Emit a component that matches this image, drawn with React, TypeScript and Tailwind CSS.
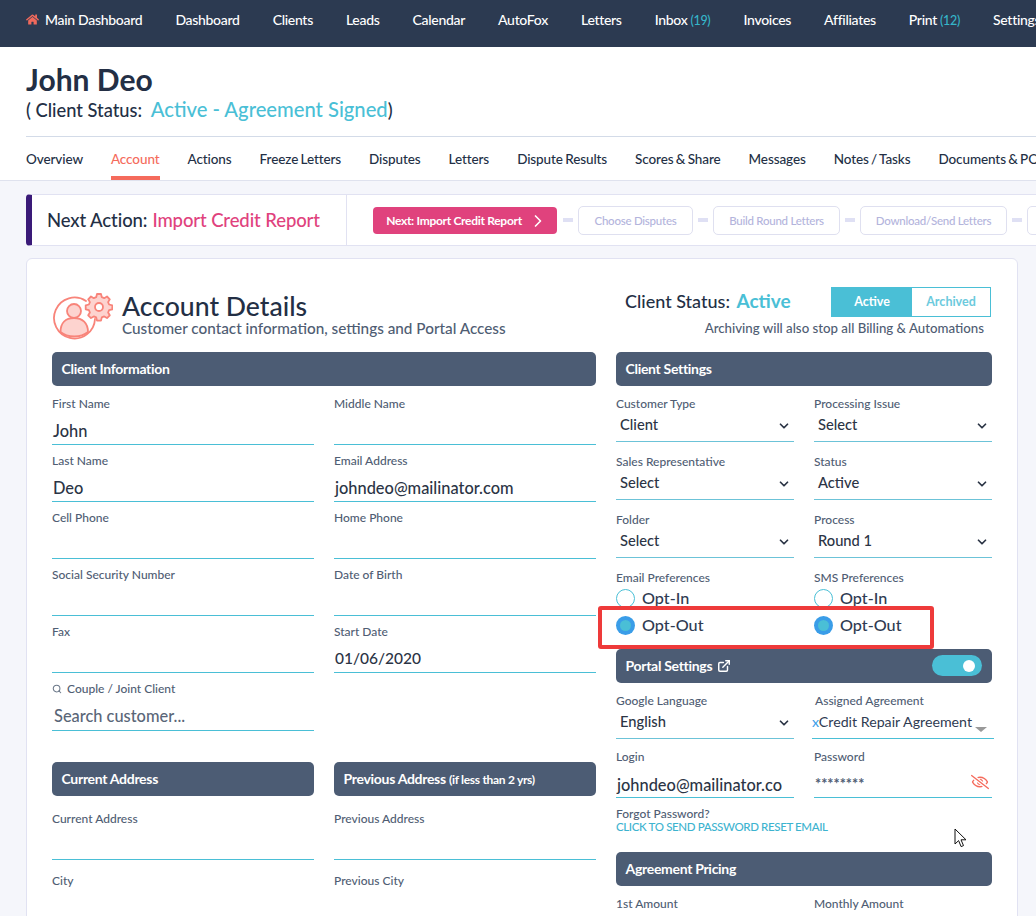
import { ChevronDown, ChevronRight, ExternalLink, Search } from 'lucide-react';
import { FaHome, FaRegEyeSlash } from 'react-icons/fa';
import type { ReactNode } from 'react';

const NAV_ITEMS = [
  { label: 'Dashboard' },
  { label: 'Clients' },
  { label: 'Leads' },
  { label: 'Calendar' },
  { label: 'AutoFox' },
  { label: 'Letters' },
  { label: 'Inbox', count: '(19)' },
  { label: 'Invoices' },
  { label: 'Affiliates' },
  { label: 'Print', count: '(12)' },
  { label: 'Settings' },
];

const TABS = [
  'Overview',
  'Account',
  'Actions',
  'Freeze Letters',
  'Disputes',
  'Letters',
  'Dispute Results',
  'Scores & Share',
  'Messages',
  'Notes / Tasks',
  'Documents & POA',
];

function SectionBar({ children, className = '' }: { children: ReactNode; className?: string }) {
  return (
    <div
      className={`flex h-[34px] items-center justify-between rounded-[5px] bg-[#4c5c74] pr-[10px] pb-[1px] pl-[9.5px] text-[14px] font-bold tracking-[-0.3px] text-white ${className}`}
    >
      {children}
    </div>
  );
}

function Field({
  label,
  value,
  muted,
  className = 'h-[50px]',
  valueClass = '',
}: {
  label: ReactNode;
  value?: string;
  muted?: boolean;
  className?: string;
  valueClass?: string;
}) {
  return (
    <div className={`border-b border-[#4abfd6] ${className}`}>
      <div className="h-[18px] text-[12px] leading-[18px] font-medium text-[#4f5d73]">{label}</div>
      <div
        className={`mt-[4px] h-[27px] px-[1px] text-[16.4px] leading-[27px] font-medium ${muted ? 'pl-[2px] font-bold text-[#5a6678]' : 'text-[#2b3445]'} ${valueClass}`}
      >
        {value}
      </div>
    </div>
  );
}

function SelectField({ label, value }: { label: string; value: string }) {
  return (
    <div className="h-[47px] border-b border-[#6cc3d8]">
      <div className="h-[18px] text-[12px] leading-[18px] font-medium text-[#4f5d73]">{label}</div>
      <div className="flex h-[24px] items-center justify-between pr-[3px] pl-[4px] text-[14.7px] font-medium text-[#2b3445]">
        <span className="mb-[2px]">{value}</span>
        <ChevronDown size={14} strokeWidth={3} className="mt-[1px] text-[#2b3445]" />
      </div>
    </div>
  );
}

function Radio({ checked, label }: { checked?: boolean; label: string }) {
  return (
    <div className="flex h-[27px] items-center gap-[7px] text-[16.2px] font-medium text-[#2f3b52]">
      {checked ? (
        <span className="flex h-[19px] w-[19px] items-center justify-center rounded-full bg-[#3a9de8]">
          <span className="h-[11px] w-[11px] rounded-full bg-[#4abfd6]" />
        </span>
      ) : (
        <span className="h-[19px] w-[19px] rounded-full border border-[#4abfd6] bg-white" />
      )}
      {label}
    </div>
  );
}

function Step({ label, className }: { label?: string; className: string }) {
  return (
    <>
      <span className="mx-[5px] h-[4px] w-[10px] shrink-0 bg-[#dfe0f4]" />
      <div
        className={`mt-[1px] flex h-[29px] shrink-0 items-center justify-center rounded-[5px] border border-[#dfe0f0] text-[11.5px] font-medium tracking-[-0.25px] text-[#b3b4dc] ${className}`}
      >
        {label}
      </div>
    </>
  );
}

function AccountIcon() {
  return (
    <svg width="62" height="50" viewBox="0 0 62 50" fill="none" className="mt-[-2px] ml-[-1px] shrink-0">
      <path d="M35 9A20.5 20.5 0 1 0 44 27" stroke="#f8847a" strokeWidth="1.8" strokeLinecap="round" />
      <circle cx="23" cy="19" r="7" fill="#fdd3cf" stroke="#f8847a" strokeWidth="1.8" />
      <path
        d="M9.5 40c0-9 5-14 13.5-14s14 5 14 14c-7 6-20.5 6-27.5 0Z"
        fill="#fdd3cf"
        stroke="#f8847a"
        strokeWidth="1.8"
      />
      <g stroke="#f8847a" strokeWidth="1.8" strokeLinejoin="round" fill="#fdd3cf" transform="translate(2 0)">
        <path d="M44 2h4l.8 3.2 2.4 1 2.8-1.7 2.8 2.8-1.7 2.8 1 2.4 3.2.8v4l-3.2.8-1 2.4 1.7 2.8-2.8 2.8-2.8-1.7-2.4 1-.8 3.2h-4l-.8-3.2-2.4-1-2.8 1.7-2.8-2.8 1.7-2.8-1-2.4-3.2-.8v-4l3.2-.8 1-2.4-1.7-2.8 2.8-2.8 2.8 1.7 2.4-1Z" />
        <circle cx="46" cy="15" r="4" fill="#fff" />
      </g>
    </svg>
  );
}

export default function App() {
  return (
    <div className="relative h-[916px] w-[1036px] overflow-hidden bg-[#f5f6fb] font-['Lato',sans-serif] text-[#232f45]">
      {/* Top nav */}
      <nav className="flex h-[47px] items-center overflow-hidden bg-[#2c3a51] pb-[8px] pl-[26px] text-[14px] font-medium tracking-[-0.3px] whitespace-nowrap text-white">
        <FaHome className="mr-[6px] shrink-0 text-[#f0695c]" size={13} />
        <span>Main Dashboard</span>
        {NAV_ITEMS.map((item) => (
          <span key={item.label} className="ml-[33px] shrink-0">
            {item.label}
            {item.count ? <span className="ml-[3px] text-[12.5px] text-[#35b5c9]">{item.count}</span> : null}
          </span>
        ))}
      </nav>

      {/* Client header */}
      <header className="border-b border-[#dfe2ee] bg-white pl-[26px]">
        <div className="h-[90px] border-b border-[#d3dbe8] pt-[15px]">
          <h1 className="text-[30px] leading-[34px] font-bold text-[#232f45]">John Deo</h1>
          <p className="mt-[1px] text-[18.3px] leading-[24px] font-medium">
            ( Client Status: <span className="ml-[4px] text-[20.2px] text-[#4abfd6]">Active - Agreement Signed</span>)
          </p>
        </div>
        <div className="flex h-[43px] gap-[28px] overflow-hidden text-[13.5px] font-medium tracking-[-0.1px] [word-spacing:-1px] whitespace-nowrap">
          {TABS.map((tab) => (
            <span
              key={tab}
              className={`flex h-[43px] shrink-0 items-center border-b-[4px] pt-[6px] ${tab === 'Account' ? 'border-[#f56b5c] text-[#f56b5c]' : 'border-transparent'}`}
            >
              {tab}
            </span>
          ))}
        </div>
      </header>

      {/* Next action */}
      <section className="mt-[13px] ml-[26px] flex h-[52px] w-[1010px] items-center overflow-hidden rounded-l-[4px] border-y border-l-[6px] border-[#e1e2f2] border-l-[#3a1a78] bg-white">
        <div className="flex h-full w-[315px] shrink-0 items-center border-r border-[#e1e2f2] pt-[1px] pl-[15px] text-[18.5px] font-medium tracking-[-0.1px] whitespace-nowrap">
          Next Action:<span className="ml-[5px] text-[#e0427d]">Import Credit Report</span>
        </div>
        <button className="mt-[1px] ml-[26px] flex h-[27px] w-[184px] shrink-0 items-center justify-center gap-[6px] rounded-[4px] bg-[#e0427d] pl-[4px] text-[12px] font-bold tracking-[-0.3px] text-white">
          Next: Import Credit Report
          <ChevronRight size={20} strokeWidth={2} />
        </button>
        <div className="w-[1px] shrink-0" />
        <Step label="Choose Disputes" className="w-[115px]" />
        <Step label="Build Round Letters" className="w-[127px]" />
        <Step label="Download/Send Letters" className="w-[147px]" />
        <Step className="w-[120px]" />
      </section>

      {/* Main card */}
      <main className="mt-[12px] ml-[26px] h-[700px] w-[992px] rounded-t-[6px] border border-[#e1e2f2] bg-white pt-[28px] pr-[25px] pl-[25px]">
        <div className="flex gap-[20px]">
          {/* Left column */}
          <div className="w-[544px] shrink-0">
            <div className="flex h-[65px] gap-[9px] pt-[7px]">
              <AccountIcon />
              <div>
                <h2 className="mt-[-3px] text-[26.6px] leading-[30px] font-medium text-[#232f45]">Account Details</h2>
                <p className="mt-[-2px] text-[15.3px] leading-[18px] font-medium whitespace-nowrap text-[#4f5d73]">
                  Customer contact information, settings and Portal Access
                </p>
              </div>
            </div>
            <SectionBar>Client Information</SectionBar>
            <div className="mt-[9px] grid grid-cols-2 gap-x-[20px] gap-y-[7px]">
              <Field label="First Name" value="John" />
              <Field label="Middle Name" />
              <Field label="Last Name" value="Deo" />
              <Field label="Email Address" value="johndeo@mailinator.com" />
              <Field label="Cell Phone" />
              <Field label="Home Phone" />
              <Field label="Social Security Number" />
              <Field label="Date of Birth" />
              <Field label="Fax" />
              <Field label="Start Date" value="01/06/2020" valueClass="!text-[15.5px]" />
              <Field
                label={
                  <span className="flex items-center gap-[5px]">
                    <Search size={10} strokeWidth={2.5} className="text-[#6b7889]" />
                    Couple / Joint Client
                  </span>
                }
                value="Search customer..."
                muted
                className="h-[51px]"
              />
            </div>
            <div className="mt-[31px] grid grid-cols-2 gap-x-[20px]">
              <SectionBar>Current Address</SectionBar>
              <SectionBar>
                <span>
                  Previous Address <span className="text-[12px]">(if less than 2 yrs)</span>
                </span>
              </SectionBar>
            </div>
            <div className="mt-[14px] grid grid-cols-2 gap-x-[20px] gap-y-[12px]">
              <Field label="Current Address" />
              <Field label="Previous Address" />
              <Field label="City" />
              <Field label="Previous City" />
            </div>
          </div>

          {/* Right column */}
          <div className="w-[376px] shrink-0">
            <div className="h-[65px]">
              <div className="flex items-start justify-between pr-[1px] pl-[9px]">
                <div className="pt-[2px] text-[18px] leading-[24px] font-medium">
                  Client Status: <span className="ml-[2px] text-[19px] font-bold text-[#4abfd6]">Active</span>
                </div>
                <div className="flex h-[30px] w-[160px] border border-[#4abfd6] text-[12.5px] font-bold">
                  <span className="flex w-[80px] items-center justify-center bg-[#4abfd6] text-white">Active</span>
                  <span className="flex flex-1 items-center justify-center text-[#6ccadd]">Archived</span>
                </div>
              </div>
              <p className="mt-[2px] pr-[8px] text-right text-[13.25px] leading-[18px] font-medium text-[#4f5d73]">
                Archiving will also stop all Billing &amp; Automations
              </p>
            </div>
            <SectionBar>Client Settings</SectionBar>
            <div className="mt-[9px] grid grid-cols-2 gap-x-[20px] gap-y-[11px]">
              <SelectField label="Customer Type" value="Client" />
              <SelectField label="Processing Issue" value="Select" />
              <SelectField label="Sales Representative" value="Select" />
              <SelectField label="Status" value="Active" />
              <SelectField label="Folder" value="Select" />
              <SelectField label="Process" value="Round 1" />
            </div>
            <div className="mt-[11px] grid h-[71px] grid-cols-2 gap-x-[20px]">
              <div>
                <div className="mb-[-2px] h-[18px] text-[12px] leading-[18px] font-medium text-[#4f5d73]">
                  Email Preferences
                </div>
                <Radio label="Opt-In" />
                <Radio label="Opt-Out" checked />
              </div>
              <div>
                <div className="mb-[-2px] h-[18px] text-[12px] leading-[18px] font-medium text-[#4f5d73]">
                  SMS Preferences
                </div>
                <Radio label="Opt-In" />
                <Radio label="Opt-Out" checked />
              </div>
            </div>
            <SectionBar className="mt-[9px]">
              <span className="flex items-center gap-[5px]">
                Portal Settings
                <ExternalLink size={14} strokeWidth={2.5} />
              </span>
              <span className="flex h-[21px] w-[50px] items-center justify-end rounded-full bg-[#4abfd6] pr-[7px]">
                <span className="h-[12px] w-[12px] rounded-full bg-white" />
              </span>
            </SectionBar>
            <div className="mt-[9px] grid grid-cols-2 gap-x-[20px]">
              <SelectField label="Google Language" value="English" />
              <div className="mr-[-2px] ml-[-2px] h-[47px] border-b border-[#4abfd6]">
                <div className="h-[18px] pl-[3px] text-[12px] leading-[18px] font-medium text-[#4f5d73]">
                  Assigned Agreement
                </div>
                <div className="flex h-[24px] items-center justify-between pr-[7px] text-[14.2px] whitespace-nowrap text-[#2f3b52]">
                  <span>
                    <span className="text-[#3a9de8]">x</span>Credit Repair Agreement
                  </span>
                  <span className="mt-[14px] h-0 w-0 border-x-[6px] border-t-[5px] border-x-transparent border-t-[#999]" />
                </div>
              </div>
            </div>
            <div className="mt-[9px] grid grid-cols-2 gap-x-[20px]">
              <div className="h-[50px] border-b border-[#4abfd6]">
                <div className="h-[18px] text-[12px] leading-[18px] font-medium text-[#4f5d73]">Login</div>
                <div className="mt-[5px] h-[26px] overflow-hidden pl-[1px] text-[16.4px] leading-[27px] font-medium whitespace-nowrap text-[#2b3445]">
                  johndeo@mailinator.co
                </div>
              </div>
              <div className="h-[50px] border-b border-[#4abfd6]">
                <div className="h-[18px] text-[12px] leading-[18px] font-medium text-[#4f5d73]">Password</div>
                <div className="flex h-[32px] items-center justify-between pr-[3px] pl-[1px] text-[14.5px] font-bold text-[#4f5d73]">
                  <span className="mt-[3px]">********</span>
                  <FaRegEyeSlash size={18} className="text-[#f56b5c]" />
                </div>
              </div>
            </div>
            <p className="mt-[9px] text-[12px] leading-[13px] font-medium text-[#4f5d73]">Forgot Password?</p>
            <p className="text-[11.5px] leading-[13px] font-medium tracking-[-0.36px] text-[#3db3cf]">
              CLICK TO SEND PASSWORD RESET EMAIL
            </p>
            <SectionBar className="mt-[19px]">Agreement Pricing</SectionBar>
            <div className="mt-[9px] grid grid-cols-2 gap-x-[20px]">
              <div className="h-[18px] text-[12px] leading-[18px] font-medium text-[#4f5d73]">1st Amount</div>
              <div className="h-[18px] text-[12px] leading-[18px] font-medium text-[#4f5d73]">Monthly Amount</div>
            </div>
          </div>
        </div>
      </main>

      {/* Screenshot annotation */}
      <div className="absolute top-[606px] left-[598px] h-[43px] w-[336px] rounded-[3px] border-[4px] border-[#ee3a3a]" />

      {/* Mouse cursor */}
      <svg width="14" height="20" viewBox="0 0 14 20" className="absolute top-[828px] left-[954px]">
        <path
          d="M1 1v15l3.6-3.4 2.5 6 2.4-1-2.5-5.8H12L1 1Z"
          fill="#fff"
          stroke="#111"
          strokeWidth="1"
          strokeLinejoin="round"
        />
      </svg>
    </div>
  );
}
